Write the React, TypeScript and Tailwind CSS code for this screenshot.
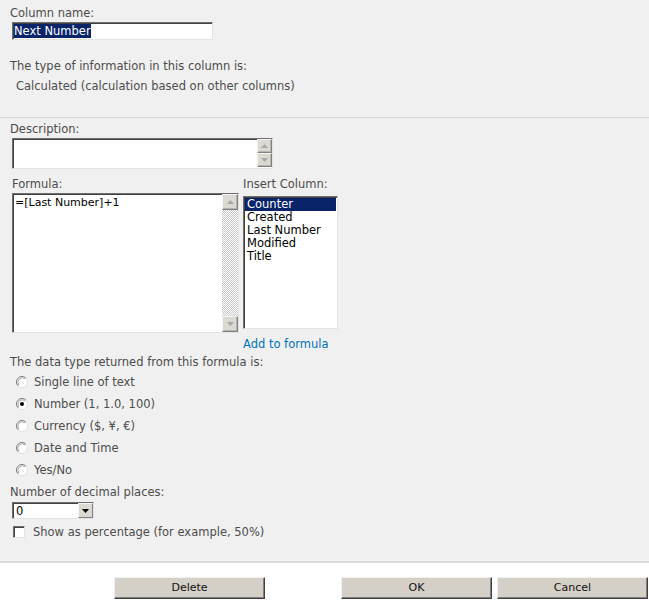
import React from 'react'

const inset =
  'border border-t-[#6f6f6f] border-l-[#6f6f6f] border-r-[#e4e4e4] border-b-[#e4e4e4] shadow-[inset_1px_1px_0_#404040]'

const Arrow = ({ dir, color = '#a8a8a8' }: { dir: 'up' | 'down'; color?: string }) => (
  <svg width="7" height="4" viewBox="0 0 7 4">
    {dir === 'up' ? <polygon points="0,4 7,4 3.5,0" fill={color} /> : <polygon points="0,0 7,0 3.5,4" fill={color} />}
  </svg>
)

const ScrollButton = ({ dir, className = '' }: { dir: 'up' | 'down'; className?: string }) => (
  <div
    className={`flex items-center justify-center bg-[#dcd9d3] border border-t-[#f4f4f4] border-l-[#f4f4f4] border-r-[#808080] border-b-[#808080] shadow-[inset_-1px_-1px_0_#b8b5ae] ${className}`}
  >
    <Arrow dir={dir} />
  </div>
)

const Radio = ({ checked = false }: { checked?: boolean }) => (
  <svg width="12" height="12" viewBox="0 0 12 12">
    <circle cx="6" cy="6" r="5.5" fill="#fff" />
    <path d="M2.11 9.89 A5.5 5.5 0 0 1 9.89 2.11" fill="none" stroke="#7a7a7a" strokeWidth="1" />
    <path d="M2.9 9.1 A4.4 4.4 0 0 1 9.1 2.9" fill="none" stroke="#a8a8a8" strokeWidth="1" />
    <path d="M9.89 2.11 A5.5 5.5 0 0 1 2.11 9.89" fill="none" stroke="#e0e0e0" strokeWidth="1" />
    {checked && <circle cx="6" cy="6" r="2" fill="#000" />}
  </svg>
)

const Button = ({ label, className = '' }: { label: string; className?: string }) => (
  <button
    className={`h-[22px] w-[151px] bg-[#d4d0c8] text-[#111] text-[11px] font-normal border border-t-[#f0f0f0] border-l-[#f0f0f0] border-r-[#404040] border-b-[#404040] shadow-[inset_-1px_-1px_0_#808080] font-['DejaVu_Sans',sans-serif] ${className}`}
  >
    {label}
  </button>
)

const dataTypes = [
  { label: 'Single line of text', checked: false },
  { label: 'Number (1, 1.0, 100)', checked: true },
  { label: 'Currency ($, ¥, €)', checked: false },
  { label: 'Date and Time', checked: false },
  { label: 'Yes/No', checked: false },
]

const columns = ['Counter', 'Created', 'Last Number', 'Modified', 'Title']

export default function App() {
  return (
    <div className="w-[649px] h-[613px] bg-white font-['DejaVu_Sans',sans-serif] text-[11.5px] leading-[14px] text-[#4c4c4c] overflow-hidden">
      <div className="bg-[#f0f0f0] border-b-2 border-[#dcdcdc]">
        {/* column name + type */}
        <div className="pl-[10px] pt-[6px] pb-[24px] border-b border-[#d6d6d6]">
          <div>Column name:</div>
          <div className={`mt-[2px] ml-[2px] w-[201px] h-[18px] bg-white flex items-center pl-[1px] ${inset}`}>
            <span className="bg-[#0a246a] text-white leading-[14px]">Next Number</span>
          </div>
          <div className="mt-[19px]">The type of information in this column is:</div>
          <div className="mt-[6px] ml-[6px]">Calculated (calculation based on other columns)</div>
        </div>

        {/* description, formula, data type */}
        <div className="pl-[10px] pt-[4px] pb-[22px]">
          <div>Description:</div>
          <div className={`mt-[2px] ml-[2px] w-[261px] h-[31px] bg-white flex justify-end ${inset}`}>
            <div className="flex flex-col w-[15px]">
              <ScrollButton dir="up" className="h-[14px]" />
              <ScrollButton dir="down" className="h-[14px]" />
            </div>
          </div>

          <div className="mt-[8px] flex">
            <div className="ml-[2px] w-[227px]">
              <div>Formula:</div>
              <div className={`mt-[2px] h-[140px] bg-white flex ${inset}`}>
                <div className="flex-1 pl-[2px] pt-[2px] text-black text-[11px]">=[Last Number]+1</div>
                <div className="w-[16px] flex flex-col bg-[repeating-conic-gradient(#c8c8c8_0%_25%,#ffffff_0%_50%)] bg-size-[2px_2px]">
                  <ScrollButton dir="up" className="h-[16px]" />
                  <div className="flex-1" />
                  <ScrollButton dir="down" className="h-[16px]" />
                </div>
              </div>
            </div>
            <div className="ml-[4px]">
              <div>Insert Column:</div>
              <div className={`mt-[5px] w-[95px] h-[133px] bg-white pt-[1px] pl-[1px] pr-[1px] ${inset}`}>
                {columns.map((c, i) => (
                  <div
                    key={c}
                    className={`h-[13px] leading-[13px] pl-[2px] text-[11.5px] ${i === 0 ? 'bg-[#0a246a] text-white' : 'text-black'}`}
                  >
                    {c}
                  </div>
                ))}
              </div>
              <div className="mt-[8px] text-[#0072bc]">Add to formula</div>
            </div>
          </div>

          <div className="mt-[4px]">The data type returned from this formula is:</div>
          <div className="mt-[2px]">
            {dataTypes.map((d) => (
              <div key={d.label} className="h-[22px] flex items-center">
                <div className="ml-[6px] w-[18px] flex">
                  <Radio checked={d.checked} />
                </div>
                <span>{d.label}</span>
              </div>
            ))}
          </div>

          <div className="mt-[4px]">Number of decimal places:</div>
          <div className={`mt-[3px] ml-[2px] w-[82px] h-[17px] bg-white flex items-center ${inset}`}>
            <span className="flex-1 pl-[3px] text-black">0</span>
            <div className="w-[15px] h-full flex items-center justify-center bg-[#dcd9d3] border border-t-[#f4f4f4] border-l-[#f4f4f4] border-r-[#808080] border-b-[#808080]">
              <Arrow dir="down" color="#000" />
            </div>
          </div>
          <div className="mt-[6px] flex items-center h-[14px]">
            <div className={`ml-[3px] w-[12px] h-[12px] bg-white ${inset}`} />
            <span className="ml-[8px]">Show as percentage (for example, 50%)</span>
          </div>
        </div>
      </div>

      {/* actions */}
      <div className="mt-[14px] flex">
        <Button label="Delete" className="ml-[114px]" />
        <Button label="OK" className="ml-[76px]" />
        <Button label="Cancel" className="ml-[5px]" />
      </div>
    </div>
  )
}
